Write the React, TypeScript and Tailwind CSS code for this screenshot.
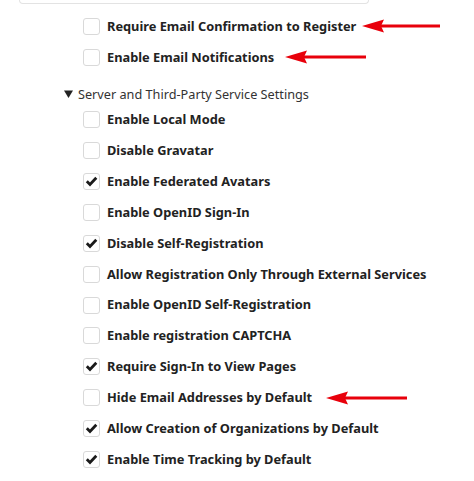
import React from "react";

const font = { fontFamily: '"Noto Sans", "Open Sans", sans-serif' };

type Item = { label: string; checked: boolean; arrow?: { gap: string; length: number } };

const emailItems: Item[] = [
  { label: "Require Email Confirmation to Register", checked: false, arrow: { gap: "ml-[6px]", length: 78 } },
  { label: "Enable Email Notifications", checked: false, arrow: { gap: "ml-[11px]", length: 81 } },
];

const serverItems: Item[] = [
  { label: "Enable Local Mode", checked: false },
  { label: "Disable Gravatar", checked: false },
  { label: "Enable Federated Avatars", checked: true },
  { label: "Enable OpenID Sign-In", checked: false },
  { label: "Disable Self-Registration", checked: true },
  { label: "Allow Registration Only Through External Services", checked: false },
  { label: "Enable OpenID Self-Registration", checked: false },
  { label: "Enable registration CAPTCHA", checked: false },
  { label: "Require Sign-In to View Pages", checked: true },
  { label: "Hide Email Addresses by Default", checked: false, arrow: { gap: "ml-[14px]", length: 81 } },
  { label: "Allow Creation of Organizations by Default", checked: true },
  { label: "Enable Time Tracking by Default", checked: true },
];

function Arrow({ gap, length }: { gap: string; length: number }) {
  return (
    <svg width={length} height="14" viewBox={`0 0 ${length} 14`} className={`${gap} shrink-0`}>
      <polygon points="0,7 22,0.5 19,7 22,13.5" fill="#e8000b" />
      <rect x="16" y="5.5" width={length - 16} height="3" fill="#e8000b" />
    </svg>
  );
}

function CheckRow({ item }: { item: Item }) {
  return (
    <div className="flex h-[30.9px] items-center">
      <div className="flex h-[17px] w-[17px] shrink-0 items-center justify-center rounded-[3px] border border-[#d9d9d9] bg-white">
        {item.checked && (
          <svg width="13" height="11" viewBox="0 0 13 11">
            <polyline points="1.8,5.3 5,8.5 11.3,1.8" fill="none" stroke="#1a1a1a" strokeWidth="2.8" />
          </svg>
        )}
      </div>
      <span className="ml-[7px] whitespace-nowrap text-[12.8px] font-bold text-[#222]">{item.label}</span>
      {item.arrow && <Arrow gap={item.arrow.gap} length={item.arrow.length} />}
    </div>
  );
}

export default function App() {
  return (
    <div className="h-[481px] w-[474px] overflow-hidden bg-white" style={font}>
      <div className="ml-[19px] h-[4px] w-[350px] rounded-b-[4px] border-x border-b border-[#e3e3e3]" />
      <div className="mt-[7px] pl-[83px]">
        {emailItems.map((item) => (
          <CheckRow key={item.label} item={item} />
        ))}
      </div>
      <div className="mt-[11.5px] flex h-[20px] items-center pl-[64px] text-[12.7px] text-[#333]">
        <svg width="9" height="8" viewBox="0 0 9 8" className="mr-[5px] shrink-0">
          <polygon points="0,0.5 9,0.5 4.5,8" fill="#222" />
        </svg>
        <span>Server and Third-Party Service Settings</span>
      </div>
      <div className="pl-[83px]">
        {serverItems.map((item) => (
          <CheckRow key={item.label} item={item} />
        ))}
      </div>
    </div>
  );
}
